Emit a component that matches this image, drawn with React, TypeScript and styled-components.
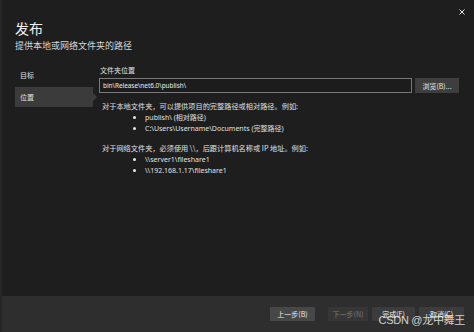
import React from "react";
import styled, { createGlobalStyle } from "styled-components";

const GlobalStyle = createGlobalStyle`
  html, body {
    margin: 0;
    padding: 0;
    background: #1e1e1e;
  }
  body {
    font-family: "Noto Sans CJK SC", "Noto Sans", sans-serif;
    color: #e6e6e6;
  }
`;

const Dialog = styled.div`
  position: relative;
  display: flex;
  flex-direction: column;
  width: 474px;
  height: 332px;
  background: #1e1e1e;
  border-left: 2px solid #262626;
  box-sizing: border-box;
  overflow: hidden;
`;

const Header = styled.div`
  padding: 19px 13px 0;
`;

const Title = styled.div`
  font-size: 14px;
  line-height: 18px;
  color: #f2f2f2;
`;

const Subtitle = styled.div`
  margin-top: 3px;
  font-size: 9px;
  line-height: 12px;
  color: #d8d8d8;
`;

const CloseButton = styled.div`
  position: absolute;
  top: 7px;
  right: 7px;
  width: 10px;
  height: 10px;
  display: flex;
  align-items: center;
  justify-content: center;
`;

const Content = styled.div`
  flex: 1;
  display: flex;
  padding: 13px 0 0 13px;
`;

const Sidebar = styled.div`
  display: flex;
  flex-direction: column;
  gap: 2px;
  width: 80px;
`;

const NavItem = styled.div<{ $active?: boolean }>`
  position: relative;
  height: 20px;
  width: 78px;
  display: flex;
  align-items: center;
  padding-left: 5px;
  box-sizing: border-box;
  font-size: 7px;
  color: #e0e0e0;
  background: ${(p) => (p.$active ? "#3b3b3b" : "transparent")};
  &::after {
    content: "";
    display: ${(p) => (p.$active ? "block" : "none")};
    position: absolute;
    right: -4px;
    top: 6px;
    border-top: 4px solid transparent;
    border-bottom: 4px solid transparent;
    border-left: 4px solid #3b3b3b;
  }
`;

const Main = styled.div`
  flex: 1;
  padding-left: 4px;
`;

const FieldLabel = styled.div`
  font-size: 7px;
  line-height: 10px;
  color: #e0e0e0;
  padding-left: 1px;
`;

const FieldRow = styled.div`
  display: flex;
  align-items: center;
  gap: 3px;
  margin-top: 3px;
`;

const PathInput = styled.div`
  width: 313px;
  height: 15px;
  box-sizing: border-box;
  border: 1px solid #7a7a7a;
  background: #1c1c1c;
  display: flex;
  align-items: center;
  padding-left: 3px;
  font-family: "Noto Sans", "Noto Sans CJK SC", sans-serif;
  font-size: 6.4px;
  color: #ececec;
`;

const BrowseButton = styled.div`
  width: 44px;
  height: 15px;
  background: #3e3e3e;
  display: flex;
  align-items: center;
  justify-content: center;
  font-size: 7px;
  color: #e8e8e8;
`;

const Help = styled.div<{ $gap?: number }>`
  margin-top: ${(p) => p.$gap ?? 0}px;
  padding-left: 3px;
  font-size: 7.2px;
  line-height: 11px;
  color: #e0e0e0;
`;

const BulletList = styled.ul`
  margin: 0;
  padding: 0 0 0 31px;
  list-style: none;
`;

const Bullet = styled.li`
  position: relative;
  padding-left: 12px;
  font-family: "Noto Sans", "Noto Sans CJK SC", sans-serif;
  font-size: 7px;
  &::before {
    content: "";
    position: absolute;
    left: 0;
    top: 4px;
    width: 3px;
    height: 3px;
    border-radius: 50%;
    background: #e8e8e8;
  }
`;

const Footer = styled.div`
  height: 36px;
  background: #2e2e2e;
  display: flex;
  align-items: center;
  justify-content: flex-end;
  padding-right: 10px;
  gap: 4px;
`;

const FooterButton = styled.div<{ $w: number; $disabled?: boolean; $primary?: boolean }>`
  width: ${(p) => p.$w}px;
  height: 14px;
  display: flex;
  align-items: center;
  justify-content: center;
  font-size: 7px;
  background: ${(p) => (p.$primary ? "#474747" : p.$disabled ? "#363636" : "#3c3c3c")};
  color: ${(p) => (p.$disabled ? "#7a7a7a" : "#ececec")};
`;

const Spacer = styled.div<{ $w: number }>`
  width: ${(p) => p.$w}px;
`;

const Watermark = styled.div`
  position: absolute;
  right: 9px;
  bottom: 5px;
  font-family: "Liberation Sans", "Noto Sans CJK SC", sans-serif;
  font-size: 11px;
  line-height: 14px;
  letter-spacing: -0.3px;
  color: rgba(255, 255, 255, 0.78);
  pointer-events: none;
`;

const App = () => {
  return (
    <>
      <GlobalStyle />
      <Dialog>
        <Header>
          <Title>发布</Title>
          <Subtitle>提供本地或网络文件夹的路径</Subtitle>
        </Header>
        <CloseButton>
          <svg width="6" height="6" viewBox="0 0 6 6">
            <path d="M0.5 0.5 L5.5 5.5 M5.5 0.5 L0.5 5.5" stroke="#e8e8e8" strokeWidth="1" />
          </svg>
        </CloseButton>
        <Content>
          <Sidebar>
            <NavItem>目标</NavItem>
            <NavItem $active>位置</NavItem>
          </Sidebar>
          <Main>
            <FieldLabel>文件夹位置</FieldLabel>
            <FieldRow>
              <PathInput>bin\Release\net6.0\publish\</PathInput>
              <BrowseButton>浏览(B)...</BrowseButton>
            </FieldRow>
            <Help $gap={8}>
              对于本地文件夹，可以提供项目的完整路径或相对路径。例如:
              <BulletList>
                <Bullet>publish\ (相对路径)</Bullet>
                <Bullet>C:\Users\Username\Documents (完整路径)</Bullet>
              </BulletList>
            </Help>
            <Help $gap={9}>
              对于网络文件夹，必须使用 \\，后跟计算机名称或 IP 地址。例如:
              <BulletList>
                <Bullet>\\server1\fileshare1</Bullet>
                <Bullet>\\192.168.1.17\fileshare1</Bullet>
              </BulletList>
            </Help>
          </Main>
        </Content>
        <Footer>
          <FooterButton $w={45} $primary>上一步(B)</FooterButton>
          <Spacer $w={5} />
          <FooterButton $w={40} $disabled>下一步(N)</FooterButton>
          <FooterButton $w={43}>完成(F)</FooterButton>
          <FooterButton $w={45}>取消(C)</FooterButton>
        </Footer>
        <Watermark>CSDN @龙中舞王</Watermark>
      </Dialog>
    </>
  );
};

export default App;
